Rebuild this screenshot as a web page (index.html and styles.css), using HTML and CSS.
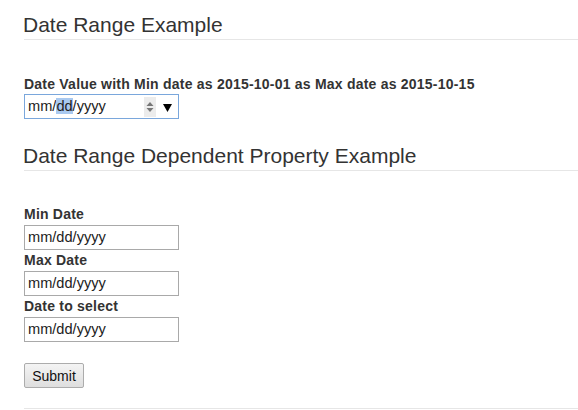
FILE: index.html
```html
<!DOCTYPE html>
<html lang="en">
<head>
<meta charset="utf-8">
<title>Date Range Example</title>
<link rel="stylesheet" href="styles.css">
</head>
<body>
<div class="page">
  <h3 class="title first">Date Range Example</h3>
  <hr class="rule">
  <div class="section s1">
    <label class="lbl lbl-tight">Date Value with Min date as 2015-10-01 as Max date as 2015-10-15</label>
    <div class="field focused">
      <span class="val">mm/<span class="sel">dd</span>/yyyy</span>
      <span class="spin">
        <svg width="8" height="12" viewBox="0 0 8 12"><path d="M4 1 L7.5 5 L0.5 5 Z" fill="#777"/><path d="M0.5 7 L7.5 7 L4 11 Z" fill="#777"/></svg>
      </span>
      <span class="drop">
        <svg width="9" height="8" viewBox="0 0 9 8"><path d="M0 0 L9 0 L4.5 8 Z" fill="#000"/></svg>
      </span>
    </div>
  </div>
  <h3 class="title second">Date Range Dependent Property Example</h3>
  <hr class="rule">
  <form class="section s2">
    <label class="lbl">Min Date</label>
    <div class="field"><span class="val">mm/dd/yyyy</span></div>
    <label class="lbl">Max Date</label>
    <div class="field"><span class="val">mm/dd/yyyy</span></div>
    <label class="lbl">Date to select</label>
    <div class="field"><span class="val">mm/dd/yyyy</span></div>
    <button type="button" class="btn">Submit</button>
  </form>
  <hr class="rule">
</div>
</body>
</html>
```
FILE: styles.css
```css
html, body {
  margin: 0;
  padding: 0;
  background: #fff;
}
body {
  font-family: "Liberation Sans", Arial, sans-serif;
  color: #333;
}
.page {
  padding-left: 24px;
  display: flex;
  flex-direction: column;
  align-items: flex-start;
}
.title {
  margin: 0 0 2px 0;
  font-size: 21px;
  line-height: 24px;
  font-weight: normal;
  color: #333;
  margin-left: -1px;
}
.title.first {
  margin-top: 13px;
}
.title.second {
  margin-top: 25px;
}
.rule {
  align-self: stretch;
  margin: 0;
  border: 0;
  border-top: 1px solid #e6e6e6;
  height: 0;
}
.section {
  display: flex;
  flex-direction: column;
  align-items: flex-start;
  margin: 0;
}
.s1 {
  padding-top: 34px;
}
.s2 {
  padding-top: 33px;
  padding-bottom: 20px;
}
.lbl {
  display: block;
  font-size: 14px;
  line-height: 16px;
  font-weight: bold;
  letter-spacing: 0.22px;
  color: #333;
  margin: 2px 0 3px 0;
}
.lbl-tight {
  margin-bottom: 2px;
}
.field {
  box-sizing: border-box;
  width: 155px;
  height: 25px;
  border: 1px solid #a9a9a9;
  background: #fff;
  display: flex;
  align-items: center;
  padding-left: 3px;
  font-size: 14.6px;
  color: #222;
}
.field.focused {
  border-color: #7aa7dc;
}
.val {
  flex: 1;
  line-height: 23px;
  white-space: nowrap;
}
.sel {
  background: #a9c9f0;
}
.spin {
  width: 12px;
  height: 20px;
  background: #ececec;
  display: flex;
  align-items: center;
  justify-content: center;
}
.drop {
  width: 22px;
  display: flex;
  justify-content: center;
  align-items: center;
  padding-top: 2px;
}
.btn {
  box-sizing: border-box;
  margin-top: 21px;
  width: 60px;
  height: 25px;
  border: 1px solid #acacac;
  border-radius: 2px;
  background: linear-gradient(#f4f4f4, #dedede);
  font-family: "Liberation Sans", Arial, sans-serif;
  font-size: 14px;
  color: #111;
  padding: 0;
}
```
